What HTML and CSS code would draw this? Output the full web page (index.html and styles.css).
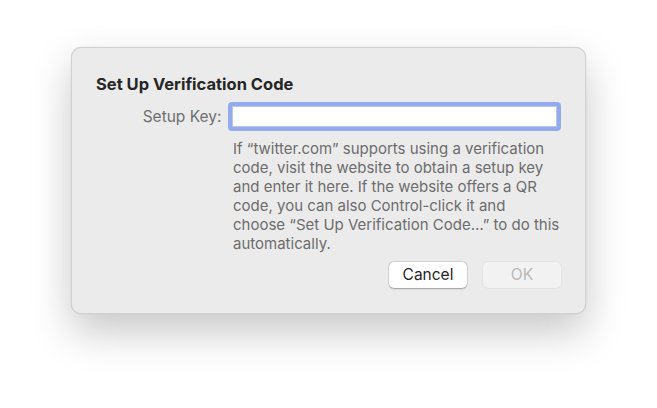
FILE: index.html
```html
<!DOCTYPE html>
<html>
<head>
<meta charset="utf-8">
<link rel="stylesheet" href="styles.css">
</head>
<body>
<div class="dialog">
  <h1 class="title">Set Up Verification Code</h1>
  <div class="row">
    <label class="label">Setup Key:</label>
    <div class="input"></div>
  </div>
  <p class="help">If “twitter.com” supports using a verification code, visit the website to obtain a setup key and enter it here. If the website offers a QR code, you can also Control-click it and choose “Set Up Verification Code…” to do this automatically.</p>
  <div class="buttons">
    <div class="btn cancel">Cancel</div>
    <div class="btn ok">OK</div>
  </div>
</div>
</body>
</html>
```
FILE: styles.css
```css
html, body {
  margin: 0;
  padding: 0;
  background: #ffffff;
}
body {
  width: 657px;
  height: 408px;
  padding-top: 47px;
  box-sizing: border-box;
  font-family: "Inter", "Liberation Sans", sans-serif;
}
.dialog {
  width: 515px;
  height: 267px;
  box-sizing: border-box;
  margin: 0 auto;
  background: #ebebeb;
  border: 1px solid #d2d2d2;
  border-radius: 10px;
  box-shadow: 0 18px 40px rgba(0,0,0,0.22), 0 0 1px rgba(0,0,0,0.2);
  padding: 26px 24px 0 24px;
}
.title {
  margin: 0;
  font-size: 16.5px;
  font-weight: 700;
  color: #262626;
  line-height: 20px;
}
.row {
  display: flex;
  align-items: center;
  gap: 7px;
  margin-top: 8px;
}
.label {
  width: 126px;
  text-align: right;
  font-size: 15.5px;
  color: #6f6f6f;
}
.input {
  width: 326px;
  height: 21px;
  background: #ffffff;
  border: 4px solid #93aaec;
  border-radius: 4px;
  box-shadow: inset 0 0 0 1px #b8c6ee;
}
.help {
  margin: 8px 0 0 137px;
  width: 328px;
  font-size: 15px;
  line-height: 19px;
  color: #6d6d6d;
}
.buttons {
  display: flex;
  justify-content: flex-end;
  gap: 16px;
  margin-top: 9px;
}
.btn {
  width: 78px;
  height: 26px;
  box-sizing: border-box;
  border-radius: 5px;
  font-size: 15.5px;
  line-height: 26px;
  text-align: center;
}
.cancel {
  background: #ffffff;
  color: #262626;
  box-shadow: 0 0.5px 1.5px rgba(0,0,0,0.3), 0 0 0 0.5px rgba(0,0,0,0.08);
}
.ok {
  background: #f2f2f2;
  color: #b9b9b9;
  box-shadow: 0 0 0 0.5px rgba(0,0,0,0.06);
}
```
